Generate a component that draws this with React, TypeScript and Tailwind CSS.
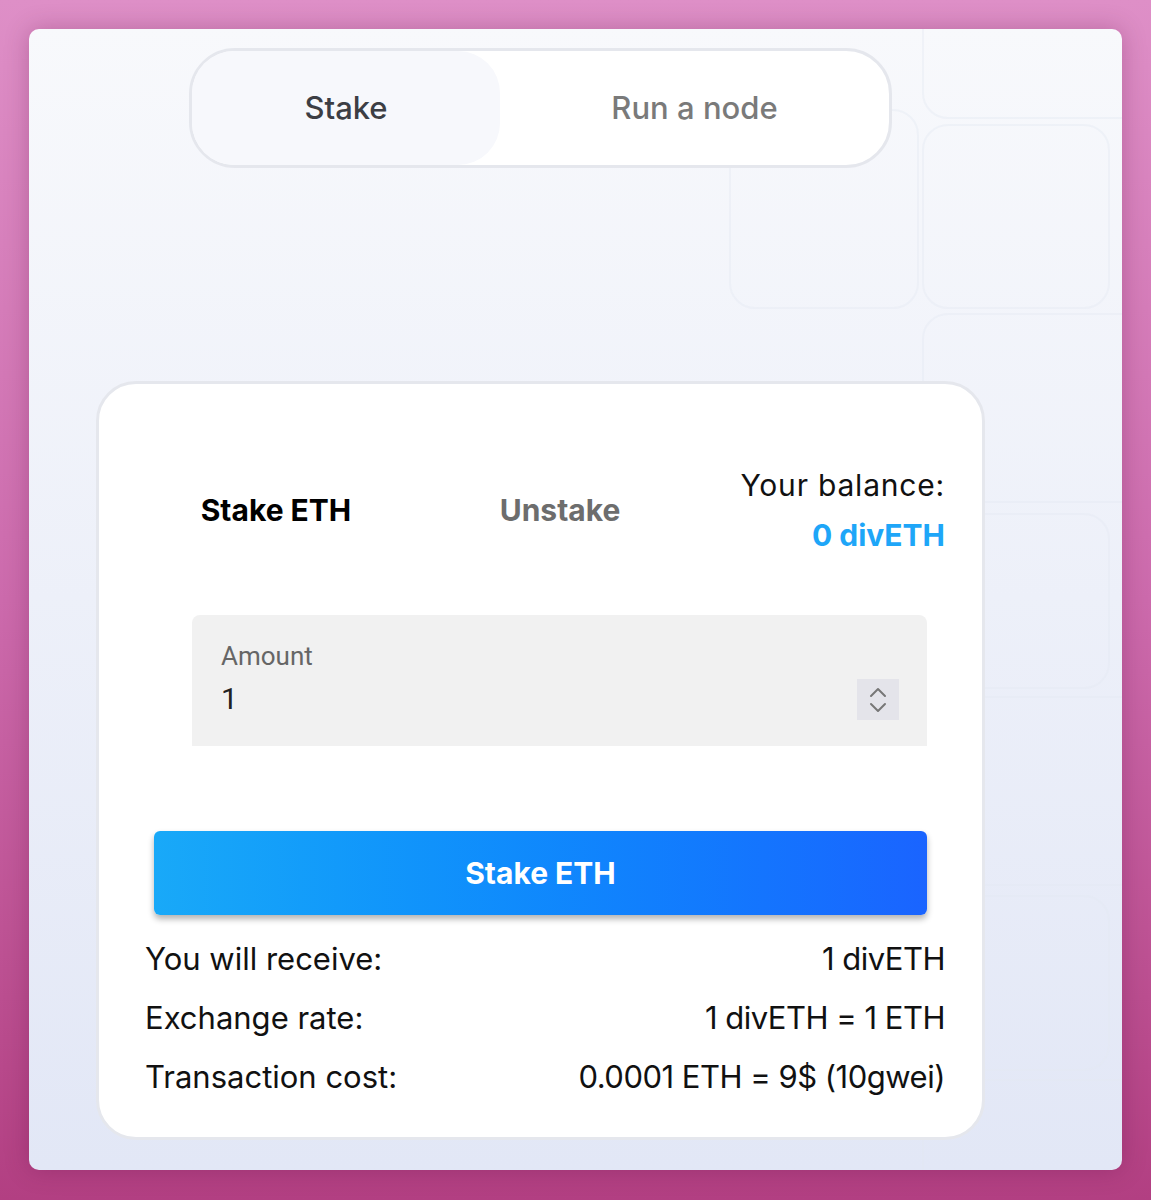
import React from "react";

const tiles = [
  { l: 893, t: -100, w: 260, h: 190 },
  { l: 700, t: 80, w: 190, h: 200 },
  { l: 893, t: 95, w: 188, h: 185 },
  { l: 893, t: 284, w: 260, h: 190 },
  { l: 893, t: 484, w: 188, h: 176 },
  { l: 893, t: 667, w: 260, h: 190 },
  { l: 893, t: 866, w: 188, h: 176 },
  { l: 893, t: 1050, w: 260, h: 190 },
];

function Row({ label, value }: { label: string; value: string }) {
  return (
    <div className="flex h-[59px] items-center justify-between text-[31px] text-[#111]">
      <span>{label}</span>
      <span className="tracking-[-0.5px]">{value}</span>
    </div>
  );
}

export default function App() {
  return (
    <div className="min-h-[1200px] w-full bg-gradient-to-b from-[#de8fc7] via-[#cc6aac] to-[#b23f82] px-[29px] pt-[29px] pb-[30px] font-['Inter','Liberation_Sans',sans-serif]">
      <div className="relative h-[1141px] overflow-hidden rounded-[10px] bg-gradient-to-b from-[#f8f9fc] to-[#e2e7f6] shadow-[0_0_24px_rgba(80,0,50,0.25)]">
        {tiles.map((t, i) => (
          <div
            key={i}
            className="absolute rounded-[26px] border-2 border-[#e4e8f2]/40"
            style={{ left: t.l, top: t.t, width: t.w, height: t.h }}
          />
        ))}

        <div className="relative pt-[19px] pl-[160px]">
          {/* top toggle */}
          <div className="flex h-[120px] w-[703px] rounded-[46px] border-[3px] border-[#e5e7ed] bg-white">
            <div className="flex w-[308px] items-center justify-center rounded-[42px] bg-[#f7f8fc] text-[31px] font-medium text-[#3c3e44]">
              Stake
            </div>
            <div className="flex flex-1 items-center justify-center text-[31px] font-medium text-[#7a7a7a]">
              Run a node
            </div>
          </div>
        </div>

        {/* card */}
        <div className="relative ml-[67px] mt-[213px] h-[759px] w-[889px] rounded-[40px] border-[3px] border-[#e5e7ed] bg-white pt-[76px]">
          <div className="flex h-[100px] items-center pl-[77px] pr-[37px]">
            <div className="flex w-[200px] justify-center text-[30px] font-bold text-black">Stake ETH</div>
            <div className="ml-[84px] flex w-[200px] justify-center text-[30px] font-bold text-[#6d6d6d]">Unstake</div>
            <div className="flex flex-1 flex-col items-end">
              <div className="flex h-[50px] items-center text-[30px] tracking-[0.8px] text-[#111]">Your balance:</div>
              <div className="flex h-[50px] items-center text-[30px] font-bold text-[#1ea6f8]">0 divETH</div>
            </div>
          </div>

          <div className="ml-[93px] mt-[55px] flex h-[131px] w-[735px] items-start rounded-t-[8px] bg-[#f1f1f1] pl-[29px] pr-[28px] font-['Roboto','Liberation_Sans',sans-serif]">
            <div className="flex flex-1 flex-col pt-[24px]">
              <span className="text-[26px] leading-[34px] text-[#666]">Amount</span>
              <span className="text-[30px] leading-[52px] text-[#222]">1</span>
            </div>
            <div className="mt-[64px] flex h-[41px] w-[42px] flex-col items-center justify-center gap-[4px] bg-[#e4e4ea]">
              <svg width="18" height="11" viewBox="0 0 18 11" fill="none" stroke="#777" strokeWidth="2" strokeLinecap="round" strokeLinejoin="round">
                <path d="M2 9 L9 2 L16 9" />
              </svg>
              <svg width="18" height="11" viewBox="0 0 18 11" fill="none" stroke="#777" strokeWidth="2" strokeLinecap="round" strokeLinejoin="round">
                <path d="M2 2 L9 9 L16 2" />
              </svg>
            </div>
          </div>

          <div className="ml-[55px] mt-[85px] flex h-[84px] w-[773px] items-center justify-center rounded-[6px] bg-gradient-to-r from-[#19a9f8] to-[#1a64ff] text-[30px] font-bold text-white shadow-[0_4px_6px_rgba(0,0,0,0.3)]">
            Stake ETH
          </div>

          <div className="mt-[15px] pl-[46px] pr-[37px]">
            <Row label="You will receive:" value="1 divETH" />
            <Row label="Exchange rate:" value="1 divETH = 1 ETH" />
            <Row label="Transaction cost:" value="0.0001 ETH = 9$ (10gwei)" />
          </div>
        </div>
      </div>
    </div>
  );
}
